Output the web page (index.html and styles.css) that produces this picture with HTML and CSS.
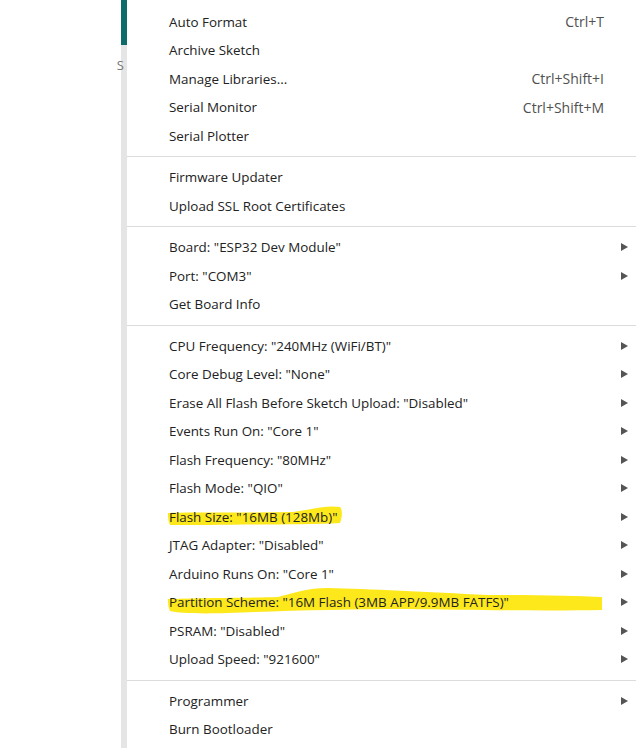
FILE: index.html
```html
<!DOCTYPE html>
<html lang="en">
<head>
<meta charset="utf-8">
<title>Tools menu</title>
<link rel="stylesheet" href="styles.css">
</head>
<body>
<div class="screen">
  <div class="backdrop">
    <span class="ghost">S</span>
  </div>
  <div class="strip"></div>
  <div class="menu">
    <div class="group">
      <div class="row"><span class="label">Auto Format</span><span class="key">Ctrl+T</span><span></span></div>
      <div class="row"><span class="label">Archive Sketch</span><span class="key"></span><span></span></div>
      <div class="row"><span class="label">Manage Libraries...</span><span class="key">Ctrl+Shift+I</span><span></span></div>
      <div class="row"><span class="label">Serial Monitor</span><span class="key">Ctrl+Shift+M</span><span></span></div>
      <div class="row"><span class="label">Serial Plotter</span><span class="key"></span><span></span></div>
    </div>
    <div class="sep"></div>
    <div class="group">
      <div class="row"><span class="label">Firmware Updater</span><span class="key"></span><span></span></div>
      <div class="row"><span class="label">Upload SSL Root Certificates</span><span class="key"></span><span></span></div>
    </div>
    <div class="sep"></div>
    <div class="group">
      <div class="row"><span class="label">Board: "ESP32 Dev Module"</span><span class="key"></span><span class="arrow"></span></div>
      <div class="row"><span class="label">Port: "COM3"</span><span class="key"></span><span class="arrow"></span></div>
      <div class="row"><span class="label">Get Board Info</span><span class="key"></span><span></span></div>
    </div>
    <div class="sep"></div>
    <div class="group">
      <div class="row"><span class="label">CPU Frequency: "240MHz (WiFi/BT)"</span><span class="key"></span><span class="arrow"></span></div>
      <div class="row"><span class="label">Core Debug Level: "None"</span><span class="key"></span><span class="arrow"></span></div>
      <div class="row"><span class="label">Erase All Flash Before Sketch Upload: "Disabled"</span><span class="key"></span><span class="arrow"></span></div>
      <div class="row"><span class="label">Events Run On: "Core 1"</span><span class="key"></span><span class="arrow"></span></div>
      <div class="row"><span class="label">Flash Frequency: "80MHz"</span><span class="key"></span><span class="arrow"></span></div>
      <div class="row"><span class="label">Flash Mode: "QIO"</span><span class="key"></span><span class="arrow"></span></div>
      <div class="row marked">
        <svg class="marker marker-size" width="180" height="26" viewBox="0 0 180 26" aria-hidden="true">
          <path d="M0 9 C30 8 80 9 125 8 C145 5 160 1 172 3 C175 6 174 14 172 19 C140 21 90 20 40 21 L2 21 C0 17 0 13 0 9 Z" fill="#fde81c"/>
        </svg>
        <span class="label">Flash Size: "16MB (128Mb)"</span><span class="key"></span><span class="arrow"></span>
      </div>
      <div class="row"><span class="label">JTAG Adapter: "Disabled"</span><span class="key"></span><span class="arrow"></span></div>
      <div class="row"><span class="label">Arduino Runs On: "Core 1"</span><span class="key"></span><span class="arrow"></span></div>
      <div class="row marked">
        <svg class="marker marker-part" width="436" height="30" viewBox="0 0 436 30" aria-hidden="true">
          <path d="M0 12 C40 11 80 11 110 10 C125 6 140 1 160 1 C200 2 260 5 320 8 C370 8 410 9 434 10 L434 23 C380 24 300 23 240 22 C180 22 110 24 60 26 C30 27 10 26 2 24 C0 20 0 16 0 12 Z" fill="#fde81c"/>
        </svg>
        <span class="label">Partition Scheme: "16M Flash (3MB APP/9.9MB FATFS)"</span><span class="key"></span><span class="arrow"></span>
      </div>
      <div class="row"><span class="label">PSRAM: "Disabled"</span><span class="key"></span><span class="arrow"></span></div>
      <div class="row"><span class="label">Upload Speed: "921600"</span><span class="key"></span><span class="arrow"></span></div>
    </div>
    <div class="sep"></div>
    <div class="group">
      <div class="row"><span class="label">Programmer</span><span class="key"></span><span class="arrow"></span></div>
      <div class="row"><span class="label">Burn Bootloader</span><span class="key"></span><span></span></div>
    </div>
  </div>
</div>
</body>
</html>
```
FILE: styles.css
```css
* { box-sizing: border-box; }
html, body { margin: 0; padding: 0; background: #ffffff; }
body {
  width: 636px;
  height: 748px;
  overflow: hidden;
  font-family: "Open Sans", "Noto Sans", sans-serif;
}
.screen {
  display: flex;
  height: 748px;
}
.backdrop {
  width: 121px;
  flex: none;
  background: #ffffff;
  position: relative;
}
.ghost {
  position: absolute;
  right: -3px;
  top: 56px;
  font-size: 13px;
  color: #777;
}
.strip {
  width: 6px;
  flex: none;
  background: linear-gradient(#0d6b6a 0, #0d6b6a 45px, #e5e5e5 45px, #e5e5e5 100%);
}
.menu {
  flex: 1;
  background: #ffffff;
  padding-top: 1.5px;
  border-top-left-radius: 8px;
  border-top-right-radius: 8px;
  color: #222222;
  font-size: 13.4px;
}
.group {
  padding: 6px 0;
}
.sep {
  height: 1px;
  background: #dcdcdc;
}
.row {
  position: relative;
  height: 28.5px;
  display: grid;
  grid-template-columns: 1fr auto 24px;
  align-items: center;
  padding: 0 8px 0 42px;
}
.label {
  position: relative;
  z-index: 1;
  white-space: nowrap;
}
.key {
  color: #505050;
  font-size: 14px;
  position: relative;
  z-index: 1;
}
.arrow {
  justify-self: end;
  margin-right: 0;
  width: 0;
  height: 0;
  border-top: 4.5px solid transparent;
  border-bottom: 4.5px solid transparent;
  border-left: 7px solid #555555;
}
.marker {
  position: absolute;
  left: 41px;
  z-index: 0;
}
.marker-size { top: 1px; }
.marker-part { top: -1px; }
```
